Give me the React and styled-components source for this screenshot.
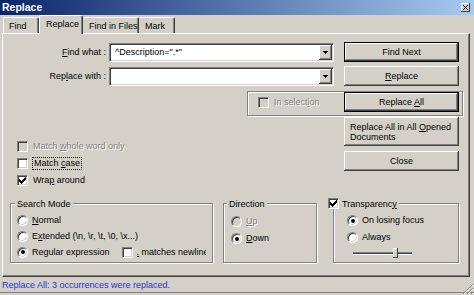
import React from "react";
import styled, { createGlobalStyle } from "styled-components";

const Global = createGlobalStyle`
  html, body { margin: 0; padding: 0; background: #d4d0c8; }
  body { font-family: "Liberation Sans", Arial, sans-serif; font-size: 9px; color: #000; }
  * { box-sizing: border-box; }
`;

const Window = styled.div`
  position: relative;
  width: 474px;
  height: 295px;
  display: flex;
  flex-direction: column;
  background: #d4d0c8;
  overflow: hidden;
`;

const TitleBar = styled.div`
  flex: none;
  height: 15px;
  display: flex;
  align-items: center;
  justify-content: space-between;
  padding: 0 4px 0 2px;
  background: linear-gradient(90deg, #0a246a 0%, #a6caf0 100%);
`;

const Title = styled.span`
  color: #fff;
  font-weight: bold;
  font-size: 10.5px;
  line-height: 15px;
`;

const CloseBox = styled.div`
  width: 9px;
  height: 9px;
  display: flex;
  align-items: center;
  justify-content: center;
  background: #d4d0c8;
  box-shadow: inset -1px -1px #404040, inset 1px 1px #fff;
`;

const TabStrip = styled.div`
  flex: none;
  height: 18px;
  display: flex;
  align-items: flex-end;
  padding-left: 3px;
  position: relative;
  z-index: 2;
`;

const Tab = styled.div`
  width: ${(p) => p.$w}px;
  height: ${(p) => (p.$active ? 19 : 16)}px;
  margin-bottom: ${(p) => (p.$active ? -1 : 0)}px;
  display: flex;
  align-items: center;
  padding-left: ${(p) => (p.$active ? 6 : 5)}px;
  padding-bottom: ${(p) => (p.$active ? 2 : 0)}px;
  background: #d4d0c8;
  border-top: 1px solid #fff;
  border-left: 1px solid ${(p) => (p.$first || p.$active ? "#fff" : "transparent")};
  border-right: 1px solid #404040;
  border-radius: 2px 2px 0 0;
  box-shadow: inset -1px 0 #808080;
  white-space: nowrap;
`;

const Panel = styled.div`
  flex: 1;
  margin: 0 4px 0 2px;
  display: flex;
  flex-direction: column;
  border-top: 1px solid #fff;
  border-left: 1px solid #fff;
  border-right: 1px solid #404040;
  border-bottom: 1px solid #404040;
  box-shadow: inset -1px -1px #808080;
  padding: 8px 0 13px 0;
`;

const FieldRow = styled.div`
  display: flex;
  align-items: center;
  height: 20px;
  margin-top: ${(p) => p.$mt || 0}px;
`;

const FieldLabel = styled.div`
  width: 103px;
  text-align: right;
  white-space: nowrap;
`;

const Combo = styled.div`
  width: 225px;
  height: 19px;
  margin-left: 3px;
  display: flex;
  align-items: stretch;
  background: #fff;
  border: 1px solid;
  border-color: #808080 #fff #fff #808080;
  box-shadow: inset 1px 1px #404040, inset -1px -1px #d4d0c8;
  padding: 1px;
`;

const ComboText = styled.div`
  flex: 1;
  display: flex;
  align-items: center;
  padding-left: 4px;
  white-space: nowrap;
  overflow: hidden;
`;

const DropButton = styled.div`
  width: 13px;
  display: flex;
  align-items: center;
  justify-content: center;
  background: #d4d0c8;
  box-shadow: inset -1px -1px #404040, inset 1px 1px #fff, inset -2px -2px #808080;
`;

const Button = styled.div`
  flex: none;
  width: 115px;
  height: ${(p) => p.$h || 20}px;
  margin-left: ${(p) => (p.$push ? "auto" : `${p.$ml == null ? 10 : p.$ml}px`)};
  margin-top: ${(p) => p.$mt || 0}px;
  display: flex;
  align-items: center;
  justify-content: ${(p) => (p.$left ? "flex-start" : "center")};
  padding-left: ${(p) => (p.$left ? 6 : 0)}px;
  line-height: 10px;
  background: #d4d0c8;
  border: ${(p) => (p.$default ? "1px solid #000" : "none")};
  box-shadow: inset -1px -1px #404040, inset 1px 1px #fff, inset -2px -2px #808080;
`;

const SelRow = styled.div`
  display: flex;
  justify-content: flex-end;
  padding-right: 6px;
  margin-top: 5px;
`;

const SelGroup = styled.div`
  width: 216px;
  height: 25px;
  display: flex;
  align-items: flex-start;
  padding: 0 3px 0 10px;
  border: 1px solid #808080;
  box-shadow: inset 1px 1px 0 #fff, 1px 1px 0 #fff;
`;

const SelCheck = styled.div`
  align-self: center;
  margin-top: -2px;
`;

const Middle = styled.div`
  display: flex;
  justify-content: space-between;
`;

const CheckColumn = styled.div`
  display: flex;
  flex-direction: column;
  padding: 22px 0 0 14px;
`;

const ButtonColumn = styled.div`
  display: flex;
  flex-direction: column;
  margin-right: 10px;
`;

const Item = styled.div`
  display: flex;
  align-items: center;
  height: ${(p) => p.$h || 17}px;
  white-space: nowrap;
  min-width: 0;
`;

const Box = styled.div`
  flex: none;
  width: 11px;
  height: 11px;
  display: flex;
  align-items: center;
  justify-content: center;
  background: ${(p) => (p.$disabled ? "#d4d0c8" : "#fff")};
  border: 1px solid;
  border-color: #808080 #fff #fff #808080;
  box-shadow: inset 1px 1px #404040, inset -1px -1px #d4d0c8;
  margin-right: ${(p) => (p.$gap == null ? 5 : p.$gap)}px;
`;

const Round = styled.div`
  flex: none;
  width: 11px;
  height: 11px;
  border-radius: 50%;
  display: flex;
  align-items: center;
  justify-content: center;
  background: ${(p) => (p.$disabled ? "#d4d0c8" : "#fff")};
  border: 1px solid;
  border-color: #808080 #fff #fff #808080;
  box-shadow: inset 1px 1px #404040, inset -1px -1px #d4d0c8;
  margin-right: 4px;
`;

const Dot = styled.div`
  width: 4px;
  height: 4px;
  border-radius: 50%;
  background: #000;
`;

const Text = styled.span`
  color: ${(p) => (p.$disabled ? "#808080" : "#000")};
  text-shadow: ${(p) => (p.$disabled ? "1px 1px 0 #fff" : "none")};
  outline: ${(p) => (p.$focus ? "1px dotted #000" : "none")};
  padding: ${(p) => (p.$focus ? "0 1px" : "0")};
  line-height: 11px;
  overflow: hidden;
`;

const Key = styled.span`
  text-decoration: underline;
  text-underline-offset: 1px;
`;

const BottomRow = styled.div`
  margin-top: auto;
  display: flex;
  padding-left: 7px;
`;

const Group = styled.div`
  position: relative;
  flex: none;
  width: ${(p) => p.$w}px;
  height: 60px;
  margin-left: ${(p) => p.$ml || 0}px;
  display: flex;
  flex-direction: column;
  padding: ${(p) => p.$pad};
  border: 1px solid #808080;
  box-shadow: inset 1px 1px 0 #fff, 1px 1px 0 #fff;
`;

const Legend = styled.div`
  position: absolute;
  top: -6px;
  left: ${(p) => p.$left}px;
  display: flex;
  align-items: center;
  height: 11px;
  padding: 0 2px;
  background: #d4d0c8;
  white-space: nowrap;
`;

const Clip = styled.div`
  flex: 1;
  min-width: 0;
  margin-left: 12px;
  display: flex;
  align-items: center;
  overflow: hidden;
  white-space: nowrap;
`;

const Slider = styled.div`
  position: relative;
  width: 59px;
  height: 11px;
  margin: 2px 0 0 6px;
  display: flex;
  align-items: center;
`;

const Track = styled.div`
  width: 100%;
  height: 3px;
  border-top: 1px solid #808080;
  border-bottom: 1px solid #fff;
  background: #404040;
  background-clip: content-box;
`;

const Thumb = styled.div`
  position: absolute;
  top: 0;
  left: 40px;
  width: 5px;
  height: 10px;
  background: #d4d0c8;
  box-shadow: inset -1px -1px #404040, inset 1px 1px #fff;
`;

const StatusBar = styled.div`
  flex: none;
  height: 15px;
  display: flex;
  align-items: center;
  padding-left: 2px;
  color: #2a36cc;
  white-space: nowrap;
`;

const StatusEdge = styled.div`
  flex: none;
  height: 3px;
  border-top: 1px solid #808080;
`;

const Grip = styled.svg`
  position: absolute;
  right: 0;
  bottom: 0;
`;

const CheckMark = () => (
  <svg width="7" height="7" viewBox="0 0 7 7" shapeRendering="crispEdges">
    <path
      d="M6 0h1v1H6zM5 1h2v1H5zM0 2h1v1H0zM4 2h3v1H4zM0 3h2v1H0zM3 3h3v1H3zM0 4h5v1H0zM1 5h3v1H1zM2 6h1v1H2z"
      fill="#000"
    />
  </svg>
);

const CheckBox = ({ checked, disabled, focus, gap, children }) => (
  <Item>
    <Box $disabled={disabled} $gap={gap}>{checked && <CheckMark />}</Box>
    <Text $disabled={disabled} $focus={focus}>{children}</Text>
  </Item>
);

const Radio = ({ checked, disabled, h, children }) => (
  <Item $h={h}>
    <Round $disabled={disabled}>{checked && <Dot />}</Round>
    <Text $disabled={disabled}>{children}</Text>
  </Item>
);

const Arrow = () => (
  <svg width="5" height="3" viewBox="0 0 5 3" shapeRendering="crispEdges">
    <path d="M0 0h5v1H0zM1 1h3v1H1zM2 2h1v1H2z" fill="#000" />
  </svg>
);

export default function App() {
  return (
    <>
      <Global />
      <Window>
        <TitleBar>
          <Title>Replace</Title>
          <CloseBox>
            <svg width="5" height="5" viewBox="0 0 5 5" shapeRendering="crispEdges">
              <path d="M0 0h1v1H0zM4 0h1v1H4zM1 1h1v1H1zM3 1h1v1H3zM2 2h1v1H2zM1 3h1v1H1zM3 3h1v1H3zM0 4h1v1H0zM4 4h1v1H4z" fill="#000" />
            </svg>
          </CloseBox>
        </TitleBar>

        <TabStrip>
          <Tab $w={36} $first>Find</Tab>
          <Tab $w={44} $active>Replace</Tab>
          <Tab $w={56}>Find in Files</Tab>
          <Tab $w={36}>Mark</Tab>
        </TabStrip>

        <Panel>
          <FieldRow>
            <FieldLabel><Key>F</Key>ind what :</FieldLabel>
            <Combo>
              <ComboText>^Description=".*"</ComboText>
              <DropButton><Arrow /></DropButton>
            </Combo>
            <Button $default>Find Next</Button>
          </FieldRow>
          <FieldRow $mt={4}>
            <FieldLabel>Rep<Key>l</Key>ace with :</FieldLabel>
            <Combo>
              <ComboText />
              <DropButton><Arrow /></DropButton>
            </Combo>
            <Button><span><Key>R</Key>eplace</span></Button>
          </FieldRow>

          <SelRow>
            <SelGroup>
              <SelCheck>
                <CheckBox disabled>In select<Key>i</Key>on</CheckBox>
              </SelCheck>
              <Button $default $push>
                <span>Replace <Key>A</Key>ll</span>
              </Button>
            </SelGroup>
          </SelRow>

          <Middle>
            <CheckColumn>
              <CheckBox disabled>Match <Key>w</Key>hole word only</CheckBox>
              <CheckBox focus>Match <Key>c</Key>ase</CheckBox>
              <CheckBox checked>Wra<Key>p</Key> around</CheckBox>
            </CheckColumn>
            <ButtonColumn>
              <Button $ml={0} $mt={1} $h={29} $left>
                <span>Replace All in All <Key>O</Key>pened<br />Documents</span>
              </Button>
              <Button $ml={0} $mt={5}>Close</Button>
            </ButtonColumn>
          </Middle>

          <BottomRow>
            <Group $w={203} $pad="8px 6px 0 6px">
              <Legend $left={4}>Search Mode</Legend>
              <Radio h={16}><Key>N</Key>ormal</Radio>
              <Radio h={16}>E<Key>x</Key>{"tended (\\n, \\r, \\t, \\0, \\x...)"}</Radio>
              <Item $h={16}>
                <Round><Dot /></Round>
                <Text>Re<Key>g</Key>ular expression</Text>
                <Clip>
                  <Box $gap={4}></Box>
                  <Text><Key>.</Key> matches newline</Text>
                </Clip>
              </Item>
            </Group>

            <Group $w={94} $ml={10} $pad="9px 0 0 7px">
              <Legend $left={3}>Direction</Legend>
              <Radio disabled><Key>U</Key>p</Radio>
              <Radio checked><Key>D</Key>own</Radio>
            </Group>

            <Group $w={126} $ml={16} $pad="8px 0 0 13px">
              <Legend $left={-8}>
                <Box $gap={3}><CheckMark /></Box>
                <span>Transparenc<Key>y</Key></span>
              </Legend>
              <Radio checked>On losing focus</Radio>
              <Radio>Always</Radio>
              <Slider>
                <Track />
                <Thumb />
              </Slider>
            </Group>
          </BottomRow>
        </Panel>

        <StatusBar>Replace All: 3 occurrences were replaced.</StatusBar>
        <StatusEdge />
        <Grip width="12" height="12" viewBox="0 0 12 12" shapeRendering="crispEdges">
          <path d="M11 1L1 11M11 5L5 11M11 9L9 11" stroke="#808080" strokeWidth="1" />
          <path d="M11 2L2 11M11 6L6 11M11 10L10 11" stroke="#fff" strokeWidth="1" />
        </Grip>
      </Window>
    </>
  );
}
